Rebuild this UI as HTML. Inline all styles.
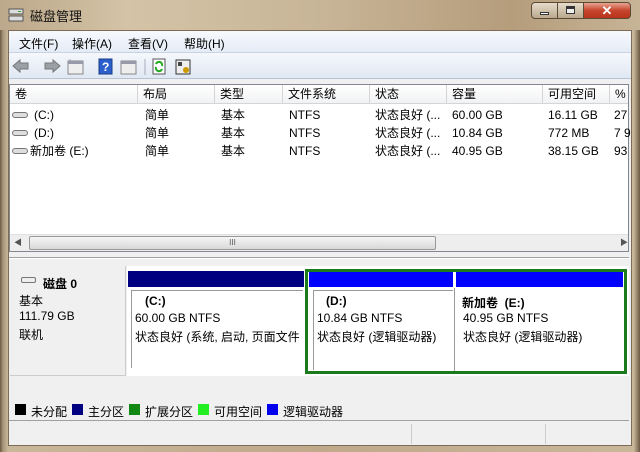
<!DOCTYPE html>
<html><head><meta charset="utf-8"><style>
*{margin:0;padding:0;box-sizing:border-box}
body{width:640px;height:452px;overflow:hidden;position:relative;font-family:"Liberation Sans","Noto Sans CJK SC",sans-serif;font-size:12px;color:#000;
background:linear-gradient(90deg,#6b5a44 0,#a89478 3px,#c9b79a 8px,#bfa98a 50%,#c9b79a 99%,#6b5a44 100%)}
.a{position:absolute;white-space:nowrap}
.title{left:0;top:0;width:640px;height:30px;background:linear-gradient(90deg,#bca88a,#d4c3a6 20%,#c8b597 50%,#b59d7c 80%,#c7b496)}
.client{left:8px;top:30px;width:624px;height:416px;background:#f0f0f0;border:1px solid #7d6c55}
.menu{left:9px;top:31px;width:622px;height:22px;background:linear-gradient(#f7f9fd,#e5ecf6);border-bottom:1px solid #c9d3e2}
.tool{left:9px;top:53px;width:622px;height:26px;background:linear-gradient(#f5f8fc,#dfe8f3);border-bottom:1px solid #b8c4d6}
.list{left:9px;top:84px;width:620px;height:168px;background:#fff;border:1px solid #828790}
.hdr{left:10px;top:85px;width:618px;height:19px;background:linear-gradient(#fff,#f1f2f4);border-bottom:1px solid #d5d5d5}
.hc{position:absolute;top:0;height:18px;line-height:18px;padding-left:5px;border-right:1px solid #d5d5d5}
.row{left:10px;width:618px;height:18px;line-height:18px}
.row span{position:absolute}
.btn{top:2px;width:26px;height:17px;border:1px solid #5a4a36;border-radius:3px;background:linear-gradient(#e6dccb,#b9a88e)}
</style></head><body>
<div class="a title"></div>
<svg class="a" style="left:8px;top:7px" width="16" height="16"><rect x="1" y="2" width="14" height="5" fill="#ddd" stroke="#555"/><rect x="1" y="9" width="14" height="5" fill="#ddd" stroke="#555"/><rect x="10" y="4" width="3" height="1" fill="#3a3"/></svg>
<div class="a" style="left:30px;top:6px;font-size:13px;color:#111">磁盘管理</div>
<div class="a btn" style="left:531px;width:27px;border-radius:4px 0 0 4px"><div style="position:absolute;left:8px;top:9px;width:9px;height:3px;background:#fff;border:1px solid #333"></div></div>
<div class="a btn" style="left:557px;width:27px;border-radius:0"><div style="position:absolute;left:8px;top:3px;width:9px;height:8px;border:1px solid #333;border-top-width:3px;background:#eee"></div></div>
<div class="a btn" style="left:583px;width:48px;background:linear-gradient(#e8a492,#c7452c 50%,#b8341c);border-radius:0 4px 4px 0;color:#fff;font-weight:bold;text-align:center;line-height:15px;font-size:13px">✕</div>
<div class="a client"></div>
<div class="a menu"></div>
<div class="a" style="left:19px;top:35px">文件(F)</div>
<div class="a" style="left:72px;top:35px">操作(A)</div>
<div class="a" style="left:128px;top:35px">查看(V)</div>
<div class="a" style="left:184px;top:35px">帮助(H)</div>
<div class="a tool"></div>
<svg class="a" style="left:12px;top:58px" width="185" height="18">
<path d="M1 8 L8 2 V5 H16 V11 H8 V14 Z" fill="#9aa0a6" stroke="#777"/>
<path d="M48 8 L41 2 V5 H33 V11 H41 V14 Z" fill="#9aa0a6" stroke="#777"/>
<line x1="58" y1="1" x2="58" y2="17" stroke="#aab"/>
<rect x="56" y="3" width="15" height="13" fill="#eee" stroke="#888"/><rect x="56" y="3" width="15" height="3" fill="#99a"/>
<line x1="87" y1="1" x2="87" y2="17" stroke="#aab"/>
<rect x="87" y="1" width="13" height="15" fill="#2b5fcc" stroke="#1a3c88"/><text x="90" y="13" fill="#fff" font-size="12" font-weight="bold" font-family="Liberation Sans">?</text>
<rect x="109" y="3" width="15" height="13" fill="#eee" stroke="#888"/><rect x="109" y="3" width="15" height="3" fill="#99a"/>
<line x1="133" y1="1" x2="133" y2="17" stroke="#aab"/>
<rect x="141" y="1" width="12" height="15" fill="#fff" stroke="#555"/><path d="M144 6 A3 3 0 0 1 150 8 M150 11 A3 3 0 0 1 144 9" stroke="#2a2" stroke-width="2" fill="none"/>
<rect x="164" y="2" width="14" height="14" fill="#eee" stroke="#333"/><rect x="166" y="4" width="4" height="4" fill="#444"/><circle cx="174" cy="12" r="3" fill="#c90"/>
</svg>
<div class="a list"></div>
<div class="a hdr">
<div class="hc" style="left:0;width:128px">卷</div>
<div class="hc" style="left:128px;width:77px">布局</div>
<div class="hc" style="left:205px;width:68px">类型</div>
<div class="hc" style="left:273px;width:87px">文件系统</div>
<div class="hc" style="left:360px;width:77px">状态</div>
<div class="hc" style="left:437px;width:96px">容量</div>
<div class="hc" style="left:533px;width:67px">可用空间</div>
<div class="hc" style="left:600px;width:18px;border:0">%</div>
</div>
<div class="a row" style="top:106px"><span style="left:2px;top:6px;width:16px;height:6px;border:1px solid #777;border-radius:3px;background:#ddd"></span><span style="left:24px">(C:)</span><span style="left:135px">简单</span><span style="left:211px">基本</span><span style="left:279px">NTFS</span><span style="left:365px">状态良好 (...</span><span style="left:442px">60.00 GB</span><span style="left:538px">16.11 GB</span><span style="left:604px">27</span></div>
<div class="a row" style="top:124px"><span style="left:2px;top:6px;width:16px;height:6px;border:1px solid #777;border-radius:3px;background:#ddd"></span><span style="left:24px">(D:)</span><span style="left:135px">简单</span><span style="left:211px">基本</span><span style="left:279px">NTFS</span><span style="left:365px">状态良好 (...</span><span style="left:442px">10.84 GB</span><span style="left:538px">772 MB</span><span style="left:604px">7 9</span></div>
<div class="a row" style="top:142px"><span style="left:2px;top:6px;width:16px;height:6px;border:1px solid #777;border-radius:3px;background:#ddd"></span><span style="left:20px">新加卷 (E:)</span><span style="left:135px">简单</span><span style="left:211px">基本</span><span style="left:279px">NTFS</span><span style="left:365px">状态良好 (...</span><span style="left:442px">40.95 GB</span><span style="left:538px">38.15 GB</span><span style="left:604px">93</span></div>
<div class="a" style="left:10px;top:234px;width:618px;height:17px;background:#eeeeee;border-top:1px solid #e0e0e0"></div>
<div class="a" style="left:14px;top:237px;font-size:8px;color:#555">◀</div>
<div class="a" style="left:620px;top:237px;font-size:8px;color:#555">▶</div>
<div class="a" style="left:29px;top:236px;width:407px;height:14px;border:1px solid #999;border-radius:2px;background:linear-gradient(#f5f5f5,#d8d8d8);text-align:center;font-size:8px;line-height:12px;color:#555">III</div>
<div class="a" style="left:9px;top:257px;width:620px;height:2px;border-top:1px solid #a0a0a0;border-bottom:1px solid #fff"></div>
<div class="a" style="left:10px;top:266px;width:116px;height:110px;background:#f0f0f0;border-right:1px solid #ccc;border-bottom:1px solid #ccc"></div>
<div class="a" style="left:21px;top:277px;width:15px;height:6px;border:1px solid #777;border-radius:2px;background:#eee"></div>
<div class="a" style="left:43px;top:275px;font-weight:bold">磁盘 0</div>
<div class="a" style="left:19px;top:292px">基本</div>
<div class="a" style="left:19px;top:309px">111.79 GB</div>
<div class="a" style="left:19px;top:326px">联机</div>
<div class="a" style="left:127px;top:266px;width:502px;height:110px;background:#fff"></div>
<div class="a" style="left:128px;top:271px;width:176px;height:16px;background:#000080"></div>
<div class="a" style="left:131px;top:290px;width:172px;height:78px;border:1px solid #999;border-right:0;border-bottom:0"></div>
<div class="a" style="left:145px;top:294px;font-weight:bold">(C:)</div>
<div class="a" style="left:135px;top:311px">60.00 GB NTFS</div>
<div class="a" style="left:135px;top:328px;width:165px;overflow:hidden">状态良好 (系统, 启动, 页面文件</div>
<div class="a" style="left:305px;top:269px;width:322px;height:105px;border:3px solid #1b7a1b"></div>
<div class="a" style="left:309px;top:272px;width:144px;height:15px;background:#0000ff"></div>
<div class="a" style="left:456px;top:272px;width:167px;height:15px;background:#0000ff"></div>
<div class="a" style="left:313px;top:290px;width:140px;height:80px;border:1px solid #999;border-right:0;border-bottom:0"></div>
<div class="a" style="left:454px;top:288px;width:1px;height:83px;background:#999"></div>
<div class="a" style="left:326px;top:294px;font-weight:bold">(D:)</div>
<div class="a" style="left:317px;top:311px">10.84 GB NTFS</div>
<div class="a" style="left:317px;top:328px">状态良好 (逻辑驱动器)</div>
<div class="a" style="left:462px;top:294px;font-weight:bold">新加卷 &nbsp;(E:)</div>
<div class="a" style="left:463px;top:311px">40.95 GB NTFS</div>
<div class="a" style="left:463px;top:328px">状态良好 (逻辑驱动器)</div>
<div class="a" style="left:9px;top:398px;width:620px;height:23px;border-bottom:1px solid #a0a0a0"></div>
<div class="a" style="left:15px;top:404px;width:11px;height:11px;background:#000"></div><div class="a" style="left:31px;top:403px">未分配</div>
<div class="a" style="left:72px;top:404px;width:11px;height:11px;background:#000080"></div><div class="a" style="left:88px;top:403px">主分区</div>
<div class="a" style="left:129px;top:404px;width:11px;height:11px;background:#118811"></div><div class="a" style="left:145px;top:403px">扩展分区</div>
<div class="a" style="left:198px;top:404px;width:11px;height:11px;background:#22ee22"></div><div class="a" style="left:214px;top:403px">可用空间</div>
<div class="a" style="left:267px;top:404px;width:11px;height:11px;background:#0000ee"></div><div class="a" style="left:283px;top:403px">逻辑驱动器</div>
<div class="a" style="left:411px;top:424px;width:1px;height:20px;background:#ccc"></div>
<div class="a" style="left:545px;top:424px;width:1px;height:20px;background:#ccc"></div>
</body></html>
